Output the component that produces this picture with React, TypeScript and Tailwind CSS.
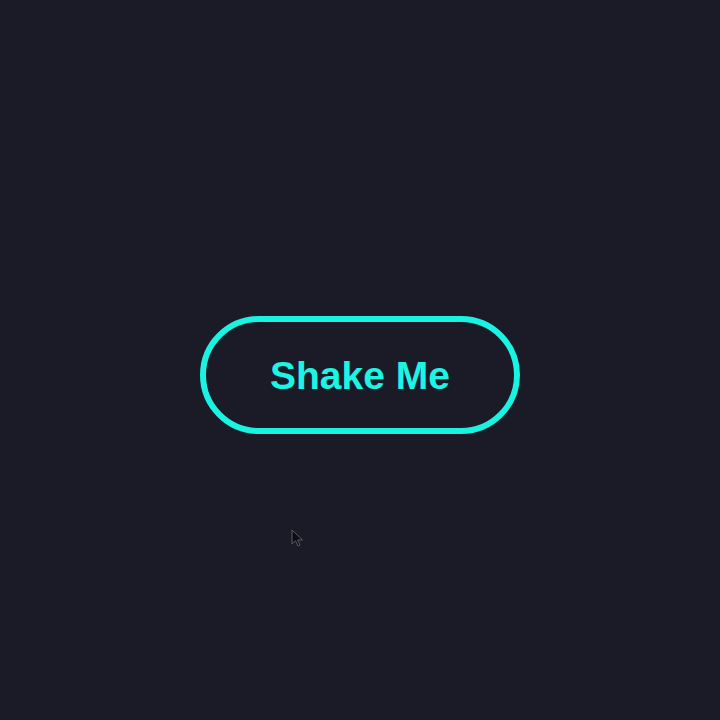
import React from 'react';

export default function App() {
    return (
        <div className="relative w-full h-[720px] bg-[#1b1a27] flex items-center justify-center pt-[30px]">
            <button
                className="w-[320px] h-[118px] rounded-full border-[6px] border-[#1af3e2] bg-transparent text-[#1df5e4] text-[39px] font-bold leading-none"
                style={{ fontFamily: '"Liberation Sans", Arial, sans-serif' }}
            >
                Shake Me
            </button>

            {/* mouse pointer */}
            <svg
                className="absolute left-[291px] top-[529px]"
                width="14"
                height="19"
                viewBox="0 0 14 19"
            >
                <path
                    d="M1 1 L1 15 L4.5 11.8 L7 17 L9 16 L6.6 11 L11.5 11 Z"
                    fill="#0d0c14"
                    stroke="#5a5966"
                    strokeWidth="1"
                    strokeLinejoin="round"
                />
            </svg>
        </div>
    );
}
